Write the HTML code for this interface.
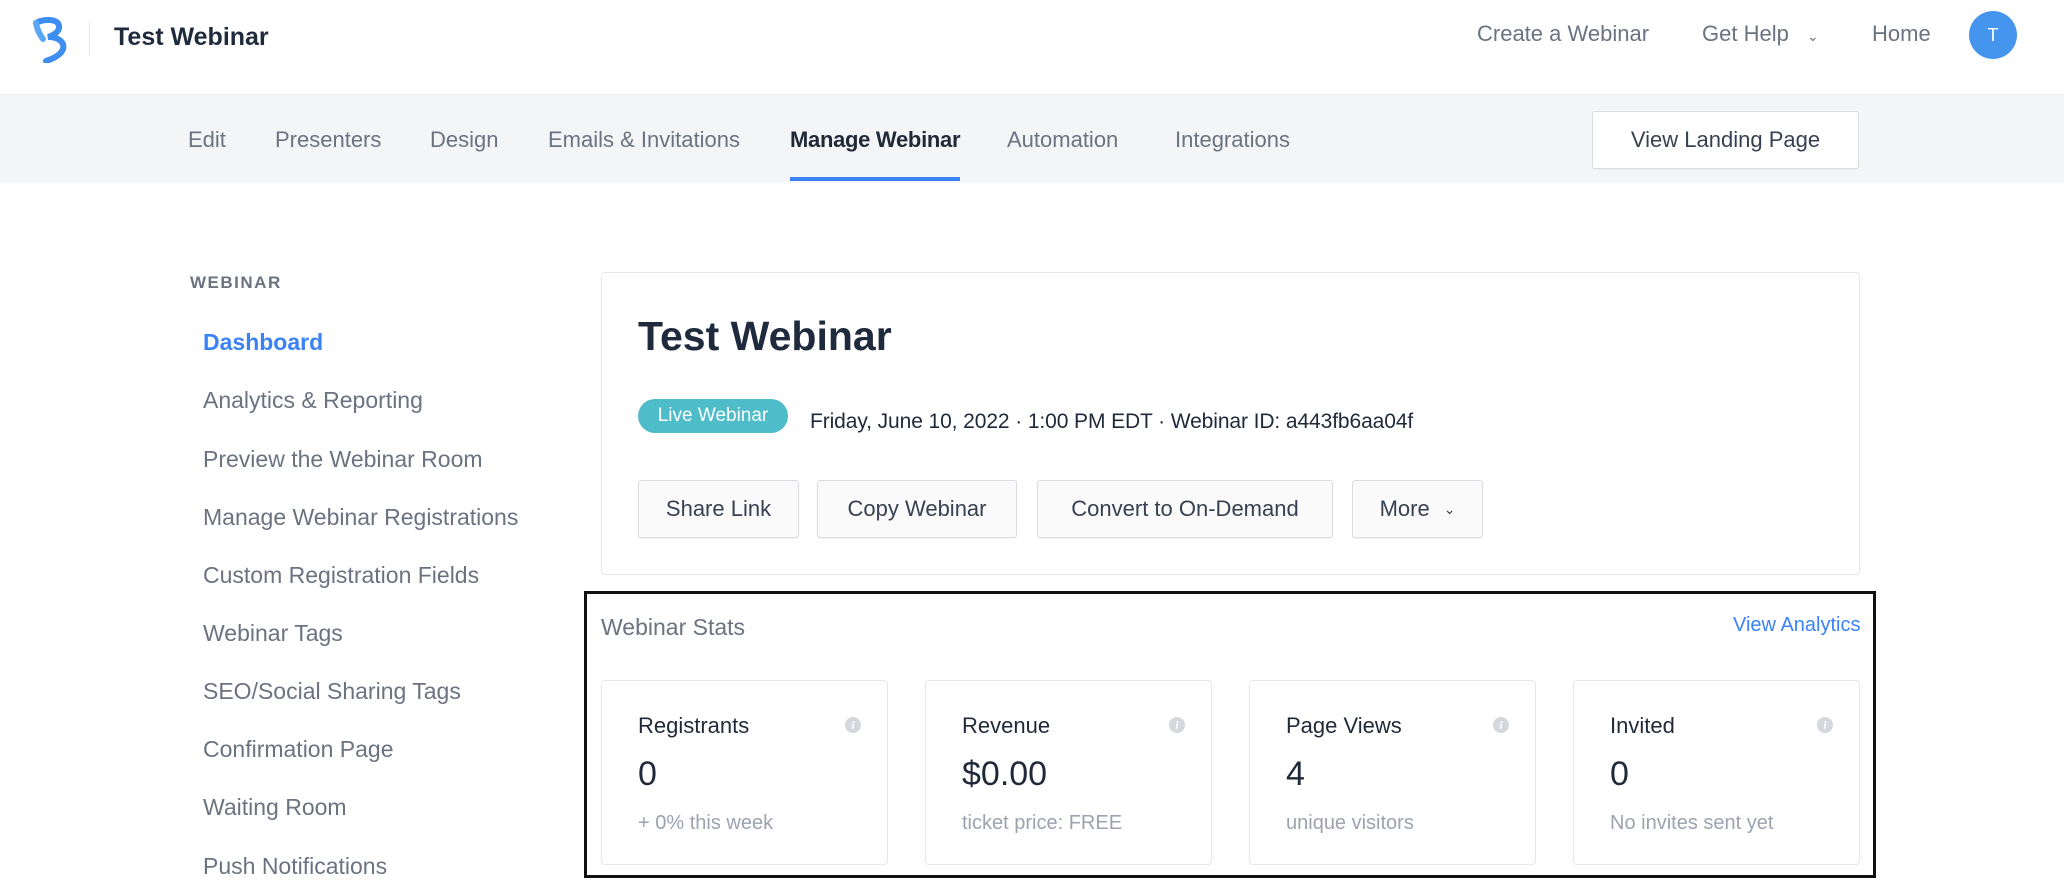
<!DOCTYPE html>
<html><head><meta charset="utf-8"><style>
*{margin:0;padding:0;box-sizing:border-box}
body{width:2064px;height:892px;overflow:hidden;background:#fff;font-family:"Liberation Sans",sans-serif;position:relative;color:#1f2937}
.a{position:absolute;white-space:nowrap}
.nav{color:#6b7280;font-size:22px;top:127px}
.side{color:#6b7280;font-size:23px;left:203px}
.btn{position:absolute;border:1px solid #d9dce1;border-radius:3px;background:#fafafa;color:#374151;font-size:22px;display:flex;align-items:center;justify-content:center;box-shadow:0 1px 1px rgba(0,0,0,.04)}
.card{position:absolute;top:680px;width:287px;height:185px;border:1px solid #e5e7eb;border-radius:4px;background:#fff}
.card .l{position:absolute;left:36px;top:32px;font-size:22px;color:#1f2937}
.card .v{position:absolute;left:36px;top:74px;font-size:34px;color:#1f2937}
.card .s{position:absolute;left:36px;top:131px;font-size:20px;color:#9ca3af}
.card .i{position:absolute;right:26px;top:36px;width:16px;height:16px;border-radius:50%;background:#d4d7dc;color:#fff;font-size:12px;font-weight:bold;font-style:italic;text-align:center;line-height:16px;font-family:"Liberation Serif",serif}
</style></head><body>
<svg class="a" style="left:31px;top:17px" width="42" height="46" viewBox="0 0 42 46"><path d="M5 6 C12 2 27 1 28 9 C29 15 21 19 17 20 C27 20 34 25 32 32 C30 38 21 42 15 44" fill="none" stroke="#3d8ef0" stroke-width="6" stroke-linecap="round"/><path d="M5 6 C6 12 9 18 12 22" fill="none" stroke="#5aa8f5" stroke-width="6" stroke-linecap="round"/></svg>
<div class="a" style="left:89px;top:22px;width:1px;height:34px;background:#e5e7eb"></div>
<div class="a" style="left:114px;top:23px;font-size:25px;font-weight:bold;color:#1f2a3d">Test Webinar</div>
<div class="a" style="left:1477px;top:21px;font-size:22px;color:#6b7280">Create a Webinar</div>
<div class="a" style="left:1702px;top:21px;font-size:22px;color:#6b7280">Get Help <span style="font-size:14px;margin-left:12px">&#8964;</span></div>
<div class="a" style="left:1872px;top:21px;font-size:22px;color:#6b7280">Home</div>
<div class="a" style="left:1969px;top:11px;width:48px;height:48px;border-radius:50%;background:#4595ee;color:#fff;font-size:18px;text-align:center;line-height:48px">T</div>
<div class="a" style="left:0;top:94px;width:2064px;height:89px;background:#f4f5f7;border-top:1px solid #eceef1"></div>
<div class="a nav" style="left:188px">Edit</div>
<div class="a nav" style="left:275px">Presenters</div>
<div class="a nav" style="left:430px">Design</div>
<div class="a nav" style="left:548px">Emails &amp; Invitations</div>
<div class="a nav" style="left:790px;color:#1f2937;font-weight:bold;letter-spacing:-0.3px">Manage Webinar</div>
<div class="a" style="left:790px;top:177px;width:170px;height:4px;background:#3b82f6"></div>
<div class="a nav" style="left:1007px">Automation</div>
<div class="a nav" style="left:1175px">Integrations</div>
<div class="btn" style="left:1592px;top:111px;width:267px;height:58px;background:#fff">View Landing Page</div>
<div class="a" style="left:190px;top:273px;font-size:17px;letter-spacing:1.5px;color:#6b7280;font-weight:bold">WEBINAR</div>
<div class="a side" style="top:329px;color:#3b82f6;font-weight:bold">Dashboard</div>
<div class="a side" style="top:387px">Analytics &amp; Reporting</div>
<div class="a side" style="top:446px">Preview the Webinar Room</div>
<div class="a side" style="top:504px">Manage Webinar Registrations</div>
<div class="a side" style="top:562px">Custom Registration Fields</div>
<div class="a side" style="top:620px">Webinar Tags</div>
<div class="a side" style="top:678px">SEO/Social Sharing Tags</div>
<div class="a side" style="top:736px">Confirmation Page</div>
<div class="a side" style="top:794px">Waiting Room</div>
<div class="a side" style="top:853px">Push Notifications</div>
<div class="a" style="left:601px;top:272px;width:1259px;height:303px;border:1px solid #e5e7eb;border-radius:4px"></div>
<div class="a" style="left:638px;top:313px;font-size:41px;font-weight:bold;color:#1f2a3d">Test Webinar</div>
<div class="a" style="left:638px;top:399px;width:150px;height:34px;border-radius:17px;background:#4fbcc9;color:#fff;font-size:19px;text-align:center;line-height:34px">Live Webinar</div>
<div class="a" style="left:810px;top:410px;font-size:21px;color:#1f2937;letter-spacing:-0.1px">Friday, June 10, 2022 · 1:00 PM EDT · Webinar ID: a443fb6aa04f</div>
<div class="btn" style="left:638px;top:480px;width:161px;height:58px">Share Link</div>
<div class="btn" style="left:817px;top:480px;width:200px;height:58px">Copy Webinar</div>
<div class="btn" style="left:1037px;top:480px;width:296px;height:58px">Convert to On-Demand</div>
<div class="btn" style="left:1352px;top:480px;width:131px;height:58px">More <span style="font-size:14px;margin-left:14px">&#8964;</span></div>
<div class="a" style="left:584px;top:591px;width:1292px;height:287px;border:3px solid #111"></div>
<div class="a" style="left:601px;top:614px;font-size:23px;color:#6b7280">Webinar Stats</div>
<div class="a" style="left:1733px;top:614px;font-size:20px;color:#3b82f6">View Analytics</div>
<div class="card" style="left:601px"><div class="l">Registrants</div><div class="i">i</div><div class="v">0</div><div class="s">+ 0% this week</div></div>
<div class="card" style="left:925px"><div class="l">Revenue</div><div class="i">i</div><div class="v">$0.00</div><div class="s">ticket price: FREE</div></div>
<div class="card" style="left:1249px"><div class="l">Page Views</div><div class="i">i</div><div class="v">4</div><div class="s">unique visitors</div></div>
<div class="card" style="left:1573px"><div class="l">Invited</div><div class="i">i</div><div class="v">0</div><div class="s">No invites sent yet</div></div>
</body></html>
